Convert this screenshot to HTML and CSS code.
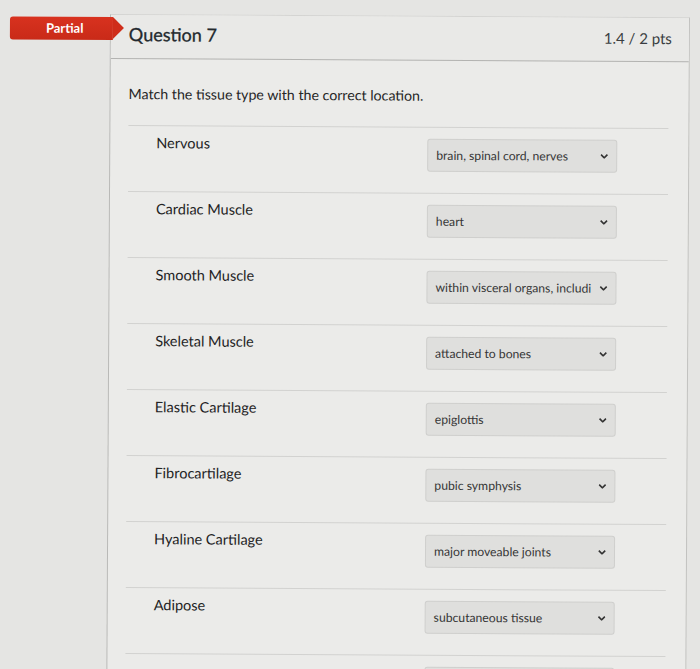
FILE: index.html
```html
<!DOCTYPE html>
<html>
<head>
<meta charset="utf-8">
<link rel="stylesheet" href="styles.css">
</head>
<body>
<div class="page">
  <div class="badge"><span>Partial</span></div>
  <div class="question">
    <div class="qhead">
      <div class="qname">Question 7</div>
      <div class="pts">1.4 / 2 pts</div>
    </div>
    <div class="qbody">
      <p class="qtext">Match the tissue type with the correct location.</p>
      <div class="rows">
        <div class="row"><div class="label">Nervous</div><div class="select"><span>brain, spinal cord, nerves</span><svg viewBox="0 0 10 6" class="chev"><path d="M1 1 L5 5 L9 1" /></svg></div></div>
        <div class="row"><div class="label">Cardiac Muscle</div><div class="select"><span>heart</span><svg viewBox="0 0 10 6" class="chev"><path d="M1 1 L5 5 L9 1" /></svg></div></div>
        <div class="row"><div class="label">Smooth Muscle</div><div class="select"><span>within visceral organs, includi</span><svg viewBox="0 0 10 6" class="chev"><path d="M1 1 L5 5 L9 1" /></svg></div></div>
        <div class="row"><div class="label">Skeletal Muscle</div><div class="select"><span>attached to bones</span><svg viewBox="0 0 10 6" class="chev"><path d="M1 1 L5 5 L9 1" /></svg></div></div>
        <div class="row"><div class="label">Elastic Cartilage</div><div class="select"><span>epiglottis</span><svg viewBox="0 0 10 6" class="chev"><path d="M1 1 L5 5 L9 1" /></svg></div></div>
        <div class="row"><div class="label">Fibrocartilage</div><div class="select"><span>pubic symphysis</span><svg viewBox="0 0 10 6" class="chev"><path d="M1 1 L5 5 L9 1" /></svg></div></div>
        <div class="row"><div class="label">Hyaline Cartilage</div><div class="select"><span>major moveable joints</span><svg viewBox="0 0 10 6" class="chev"><path d="M1 1 L5 5 L9 1" /></svg></div></div>
        <div class="row"><div class="label">Adipose</div><div class="select"><span>subcutaneous tissue</span><svg viewBox="0 0 10 6" class="chev"><path d="M1 1 L5 5 L9 1" /></svg></div></div>
        <div class="row"><div class="label"></div><div class="select"></div></div>
      </div>
    </div>
  </div>
</div>
</body>
</html>
```

FILE: styles.css
```css
html, body {
  margin: 0;
  padding: 0;
  height: 100%;
  overflow: hidden;
}
body {
  background: #e5e5e3;
  font-family: Lato, "Liberation Sans", sans-serif;
  color: #2f2f30;
}
.page {
  position: relative;
  padding-top: 14px;
  padding-left: 110px;
  width: 580px;
  transform: rotate(0.32deg);
  transform-origin: 110px 16px;
}
.badge {
  position: absolute;
  left: 10px;
  top: 17px;
  width: 103px;
  height: 23px;
  background: linear-gradient(#d8321f, #c92a18);
  border-radius: 3px 0 0 3px;
  color: #fff;
  font-weight: 700;
  font-size: 13px;
  z-index: 2;
}
.badge span {
  position: absolute;
  left: 36px;
  top: 3px;
}
.badge::after {
  content: "";
  position: absolute;
  right: -11px;
  top: 0;
  border-top: 11.5px solid transparent;
  border-bottom: 11.5px solid transparent;
  border-left: 11px solid #cf2d1a;
}
.question {
  border-left: 1px solid #b9b9b7;
  border-right: 1px solid #c2c2c0;
  border-top: 1px solid #d4d4d2;
  background: #ebebe9;
}
.qhead {
  height: 43px;
  display: flex;
  align-items: center;
  justify-content: space-between;
  padding: 0 17px 0 18px;
  border-bottom: 1px solid #b3b3b1;
  background: #e9e9e7;
}
.qname {
  font-size: 18px;
  font-weight: 400;
  color: #23292e;
  margin-top: -5px;
  -webkit-text-stroke: 0.3px #23292e;
}
.pts {
  font-size: 15px;
  color: #3a3e42;
  margin-top: -3px;
}
.qbody {
  padding: 26px 0 0 18px;
}
.qtext {
  margin: 0 0 22px 0;
  font-size: 14.2px;
  line-height: 18px;
  color: #262626;
}
.rows {
  width: 540px;
}
.row {
  height: 65px;
  border-top: 1px solid #d2d2d0;
  display: flex;
  align-items: flex-start;
}
.label {
  width: 271px;
  padding-left: 28px;
  padding-top: 8px;
  font-size: 14.5px;
  line-height: 18px;
  color: #232324;
}
.select {
  margin-top: 11px;
  width: 190px;
  height: 33px;
  box-sizing: border-box;
  border: 1px solid #cfcfcd;
  border-radius: 3px;
  background: #dfdfdd;
  display: flex;
  align-items: center;
  justify-content: space-between;
  padding: 0 8px 0 8px;
  font-size: 12.2px;
  color: #363636;
}
.chev {
  width: 8px;
  height: 5px;
  fill: none;
  stroke: #333;
  stroke-width: 2;
}
```
